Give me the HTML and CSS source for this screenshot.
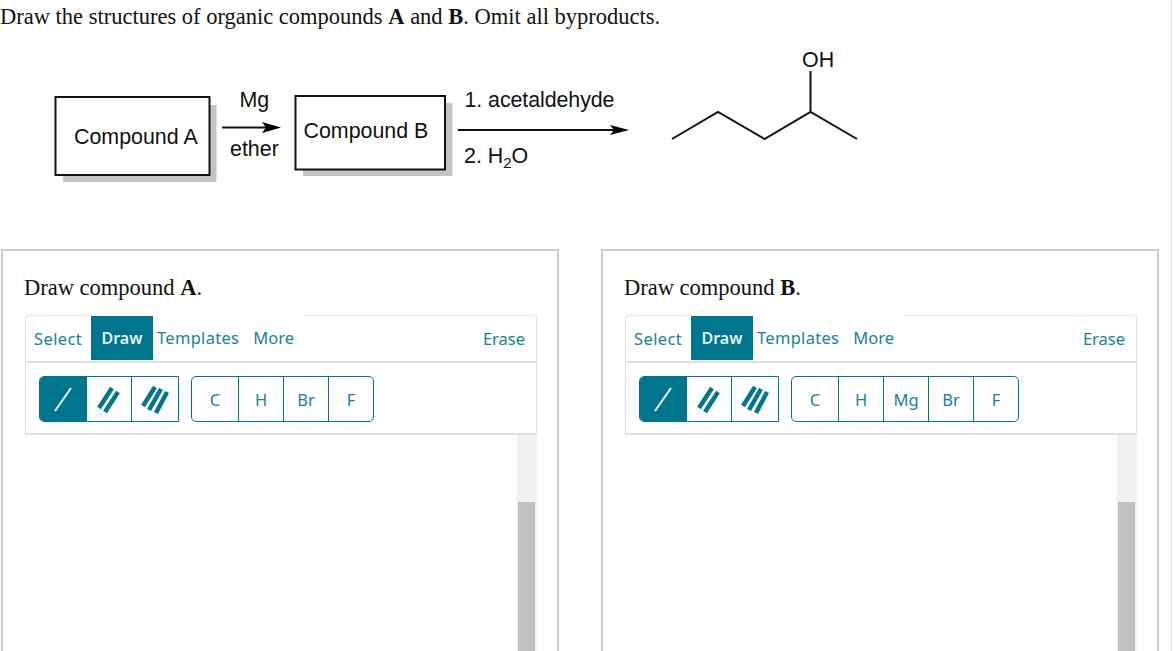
FILE: index.html
```html
<!DOCTYPE html>
<html lang="en">
<head>
  <meta charset="UTF-8">
  <meta name="viewport" content="width=device-width, initial-scale=1.0">
  <title>Draw compounds A and B</title>
  <link rel="stylesheet" href="styles.css">
</head>
<body>

  <p class="question">Draw the structures of organic compounds <b>A</b> and <b>B</b>. Omit all byproducts.</p>

  <!-- Reaction scheme -->
  <svg class="scheme" width="1170" height="160" viewBox="0 40 1170 160">
    <rect class="shadow" x="63" y="105" width="153.500" height="77"/>
    <rect class="box" x="55.500" y="97" width="154" height="78"/>
    <text x="74" y="144">Compound A</text>
    <text x="239.500" y="107">Mg</text>
    <line class="line" x1="222" y1="127.500" x2="268" y2="127.500"/>
    <polygon points="281,127.500 262,122 266,127.500 262,133"/>
    <text x="230" y="155.500">ether</text>

    <rect class="shadow" x="303" y="103" width="149.500" height="73"/>
    <rect class="box" x="295.500" y="96" width="149.500" height="73.500"/>
    <text x="303.500" y="137.500">Compound B</text>
    <text x="464.500" y="106.500" textLength="150">1. acetaldehyde</text>
    <line class="line" x1="458" y1="130" x2="615" y2="130"/>
    <polygon points="629,130 610,125 614,130 610,135"/>
    <text x="464" y="163">2. H<tspan class="sub" dy="5">2</tspan><tspan dy="-5">O</tspan></text>

    <polyline class="bond" points="672,139 718,112 764.500,139 810.500,112 857,139"/>
    <line class="bond" x1="810.500" y1="112" x2="810.500" y2="71"/>
    <text x="802" y="66.500">OH</text>
  </svg>

  <div class="panels">

    <!-- Compound A -->
    <div class="panel">
      <p class="panel-title">Draw compound <b>A</b>.</p>
      <div class="editor">
        <div class="menu-bar">
          <div class="tabs">
            <span class="tab tab-first">Select</span>
            <span class="tab tab-active">Draw</span>
            <span class="tab tab-templates">Templates</span>
            <span class="tab">More</span>
          </div>
          <span class="tab tab-erase">Erase</span>
        </div>
        <div class="tool-row">
          <div class="btn-group bonds">
            <span class="tool tool-active">
              <svg width="46" height="44" viewBox="0 0 46 44"><line class="bond-on" x1="15" y1="34" x2="31" y2="11"/></svg>
            </span>
            <span class="tool">
              <svg width="46" height="44" viewBox="0 0 46 44"><line class="bond-off" x1="13" y1="31" x2="26" y2="11"/><line class="bond-off" x1="19" y1="35" x2="32" y2="15"/></svg>
            </span>
            <span class="tool">
              <svg width="46" height="44" viewBox="0 0 46 44"><line class="bond-off" x1="11" y1="29" x2="23" y2="10"/><line class="bond-off" x1="17" y1="33" x2="29" y2="12"/><line class="bond-off" x1="24" y1="36" x2="35" y2="15"/></svg>
            </span>
          </div>
          <div class="btn-group atoms">
            <span class="tool">C</span>
            <span class="tool">H</span>
            <span class="tool">Br</span>
            <span class="tool">F</span>
          </div>
        </div>
        <div class="canvas">
          <div class="scroll-track"><div class="scroll-thumb"></div></div>
        </div>
      </div>
    </div>

    <!-- Compound B -->
    <div class="panel">
      <p class="panel-title">Draw compound <b>B</b>.</p>
      <div class="editor">
        <div class="menu-bar">
          <div class="tabs">
            <span class="tab tab-first">Select</span>
            <span class="tab tab-active">Draw</span>
            <span class="tab tab-templates">Templates</span>
            <span class="tab">More</span>
          </div>
          <span class="tab tab-erase">Erase</span>
        </div>
        <div class="tool-row">
          <div class="btn-group bonds">
            <span class="tool tool-active">
              <svg width="46" height="44" viewBox="0 0 46 44"><line class="bond-on" x1="15" y1="34" x2="31" y2="11"/></svg>
            </span>
            <span class="tool">
              <svg width="46" height="44" viewBox="0 0 46 44"><line class="bond-off" x1="13" y1="31" x2="26" y2="11"/><line class="bond-off" x1="19" y1="35" x2="32" y2="15"/></svg>
            </span>
            <span class="tool">
              <svg width="46" height="44" viewBox="0 0 46 44"><line class="bond-off" x1="11" y1="29" x2="23" y2="10"/><line class="bond-off" x1="17" y1="33" x2="29" y2="12"/><line class="bond-off" x1="24" y1="36" x2="35" y2="15"/></svg>
            </span>
          </div>
          <div class="btn-group atoms">
            <span class="tool">C</span>
            <span class="tool">H</span>
            <span class="tool">Mg</span>
            <span class="tool">Br</span>
            <span class="tool">F</span>
          </div>
        </div>
        <div class="canvas">
          <div class="scroll-track"><div class="scroll-thumb"></div></div>
        </div>
      </div>
    </div>

  </div>
</body>
</html>
```

FILE: styles.css
```css
html, body {
  height: 651px;
  overflow: hidden;
}
body {
  margin: 0;
  background-color: #fff;
  color: #111;
  font-family: "Liberation Serif", serif;
  border-right: 1px solid #e4e4e4;
  box-sizing: border-box;
  width: 1172px;
}
.question {
  margin: 0;
  padding-top: 5px;
  height: 40px;
  box-sizing: border-box;
  font-size: 22.500px;
  line-height: 24px;
}
.scheme {
  display: block;
  height: 160px;
}
.scheme text {
  font-family: "Liberation Sans", sans-serif;
  font-size: 21.400px;
  fill: #111;
}
.scheme .sub {
  font-size: 15px;
}
.shadow {
  fill: #c4c4c4;
}
.box {
  fill: #fff;
  stroke: #111;
  stroke-width: 2;
}
.line {
  stroke: #111;
  stroke-width: 2;
}
.bond {
  fill: none;
  stroke: #111;
  stroke-width: 2;
}
.panels {
  display: flex;
  gap: 42px;
  height: 451px;
  box-sizing: border-box;
  padding: 49px 0 0 1px;
  overflow: hidden;
}
.panel {
  width: 558px;
  height: 500px;
  box-sizing: border-box;
  border: 2px solid #ccc;
  padding: 0 20px 0 22px;
}
.panel-title {
  margin: 0 0 0 -1px;
  padding-top: 25px;
  height: 64px;
  box-sizing: border-box;
  font-size: 22.500px;
  line-height: 24px;
}
.editor {
  font-family: "Noto Sans", sans-serif;
  color: #1a7f97;
}
.menu-bar {
  display: flex;
  justify-content: space-between;
  height: 48px;
  box-sizing: border-box;
  border: 1px solid #e0e0e0;
  border-bottom: 2px solid #e0e0e0;
  border-radius: 4px 4px 0 0;
}
.tabs {
  display: flex;
  margin: -1px 0 0 -1px;
  height: 46px;
  width: 280px;
  background-color: #fff;
}
.tab {
  flex: none;
  font-size: 16.500px;
  line-height: 46px;
  padding: 0 15px 0 0;
}
.tab-first {
  width: 66px;
  padding-left: 8px;
  box-sizing: border-box;
  border-top: 1px solid #e0e0e0;
  border-left: 1px solid #e0e0e0;
  border-radius: 4px 0 0 0;
  letter-spacing: 0.4px;
}
.tab-active {
  width: 62px;
  height: 44px;
  margin-top: 1px;
  box-sizing: border-box;
  padding: 0;
  line-height: 45px;
  text-align: center;
  background-color: #00758e;
  color: #e8f4f6;
  font-size: 16px;
  font-weight: 600;
}
.tab-templates {
  margin-left: 4px;
  padding-right: 14px;
  letter-spacing: 0.3px;
}
.tab-erase {
  padding-right: 11px;
}
.tool-row {
  display: flex;
  gap: 12px;
  height: 72px;
  box-sizing: border-box;
  padding: 13px 13px 0;
  border: 1px solid #e0e0e0;
  border-top: 0;
  border-bottom: 2px solid #e0e0e0;
}
.btn-group {
  display: flex;
  height: 46px;
  box-sizing: border-box;
  border: 1px solid #00758e;
  border-radius: 5px 0 0 5px;
}
.atoms {
  border-radius: 5px;
}
.tool {
  display: flex;
  align-items: center;
  justify-content: center;
  width: 45px;
  box-sizing: border-box;
  border-left: 1px solid #00758e;
  font-size: 16.500px;
}
.tool:first-child {
  width: 46px;
  border-left: 0;
}
.bonds .tool:last-child {
  width: 47px;
}
.tool svg {
  flex-shrink: 0;
}
.tool-active {
  background-color: #00758e;
  border-radius: 4px 0 0 4px;
}
.bond-on {
  stroke: #f2f8fa;
  stroke-width: 2;
}
.bond-off {
  stroke: #00758e;
  stroke-width: 4.500;
}
.canvas {
  display: flex;
  justify-content: flex-end;
  height: 300px;
}
.scroll-track {
  width: 20px;
  padding: 67px 2px 0 1px;
  box-sizing: border-box;
  background-color: #f0f0f0;
}
.scroll-thumb {
  height: 233px;
  background-color: #c0c0c0;
}
```
